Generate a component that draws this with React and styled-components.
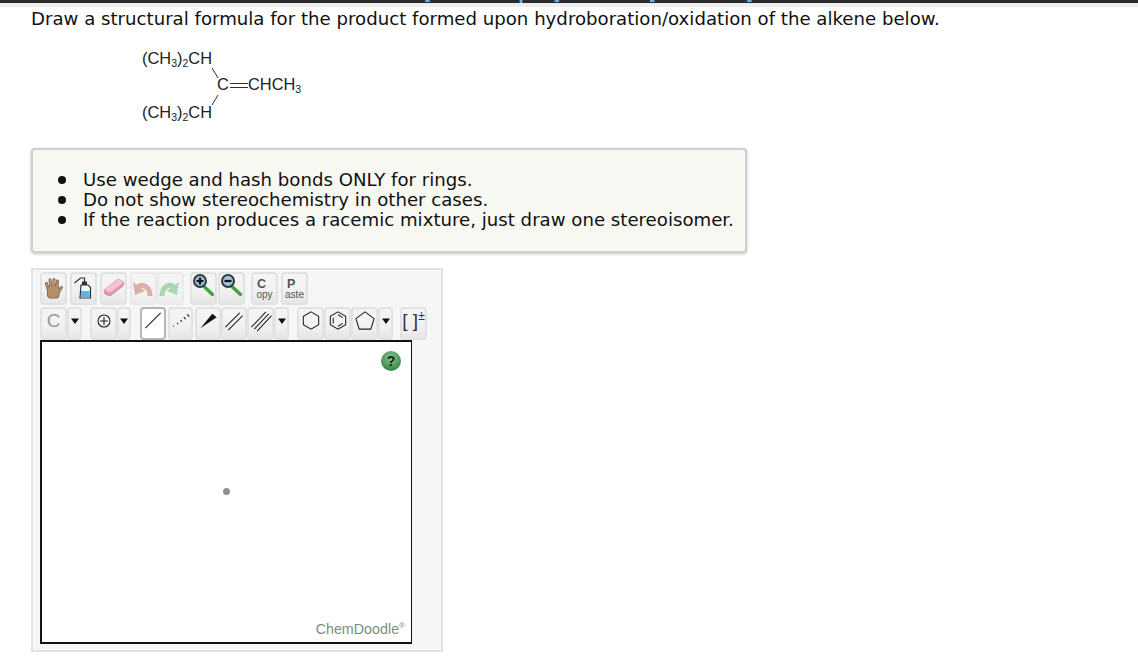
import styled, { createGlobalStyle } from "styled-components";

const GlobalStyle = createGlobalStyle`
  html, body {
    margin: 0;
    padding: 0;
    background: #fff;
    font-family: "DejaVu Sans", Verdana, sans-serif;
  }
`;

const TopBar = styled.div`
  height: 3px;
  background: #2b2b2b;
  overflow: hidden;
  display: flex;
  padding-left: 424px;
  gap: 88px;
`;

const TopLink = styled.span`
  font-size: 15px;
  line-height: 15px;
  font-weight: bold;
  letter-spacing: ${(p) => p.$spacing}px;
  margin-top: -12px;
  color: #63b5ea;
  white-space: nowrap;
`;

const SubBar = styled.div`
  height: 4px;
  background: #eeeeee;
`;

const Content = styled.div`
  padding: 2px 0 0 31px;
`;

const Question = styled.p`
  margin: 0;
  font-size: 18.15px;
  line-height: 20px;
  color: #111;
  white-space: nowrap;
`;

const Molecule = styled.svg`
  display: block;
  margin: 18px 0 0 105px;
`;

const Notice = styled.div`
  box-sizing: border-box;
  width: 716px;
  height: 105px;
  margin-top: 19px;
  padding: 20px 0 0 50px;
  background: #f8f8f3;
  border: 2px solid #cfcfcf;
  border-radius: 4px;
  box-shadow: 0 1px 3px rgba(0, 0, 0, 0.25);
`;

const Bullets = styled.ul`
  margin: 0;
  padding: 0;
  list-style: none;
  font-size: 18.15px;
  line-height: 20px;
  color: #111;
  white-space: nowrap;
`;

const Bullet = styled.li`
  display: flex;
  align-items: center;

  &::before {
    content: "";
    width: 8px;
    height: 8px;
    margin: 0 17px 0 -25px;
    border-radius: 50%;
    background: #111;
  }
`;

const Editor = styled.div`
  box-sizing: border-box;
  width: 412px;
  height: 384px;
  margin-top: 15px;
  padding: 2px 0 0 7px;
  background: #f6f6f6;
  border: 2px solid #e3e3e3;
`;

const ToolStack = styled.div`
  display: flex;
  flex-direction: column;
  gap: 2px;
`;

const ToolRow = styled.div`
  --lift: ${(p) => p.$lift ?? 0}px;
  display: flex;
  height: 33px;
`;

const Group = styled.div`
  display: flex;
  margin-right: ${(p) => p.$after ?? 0}px;
`;

const Tool = styled.div`
  box-sizing: border-box;
  width: ${(p) => p.$w ?? 27}px;
  height: 33px;
  padding-bottom: var(--lift);
  display: flex;
  flex-direction: column;
  align-items: center;
  justify-content: center;
  border: 2px solid ${(p) => (p.$active ? "#b5b5b5" : "#e2e2e2")};
  border-radius: 4px;
  background: ${(p) =>
    p.$active
      ? "#ffffff"
      : "linear-gradient(#f4f4f4 0%, #f2f2f2 55%, #e6e6e6 100%)"};
  color: #333;
  opacity: ${(p) => (p.$off ? 0.55 : 1)};
`;

const Letter = styled.span`
  font-family: "Liberation Sans", Arial, sans-serif;
  font-size: 19px;
  line-height: 19px;
  color: #999;
`;

const ClipLetter = styled.span`
  font-family: "Liberation Sans", Arial, sans-serif;
  font-size: 12.5px;
  line-height: 12px;
  font-weight: bold;
  color: #555;
  align-self: flex-start;
  margin-left: 4px;
`;

const ClipRest = styled.span`
  font-family: "Liberation Sans", Arial, sans-serif;
  font-size: 10px;
  line-height: 10px;
  color: #555;
`;

const Bracket = styled.span`
  font-family: "Liberation Sans", Arial, sans-serif;
  font-size: 19px;
  line-height: 19px;
  font-weight: 300;
  color: #333;
  white-space: nowrap;

  sup {
    font-size: 12px;
    line-height: 0;
  }
`;

const Canvas = styled.div`
  position: relative;
  box-sizing: border-box;
  width: 372px;
  height: 304px;
  background: #fff;
  border: 2px solid #111;
  border-right-width: 1px;
`;

const HelpBadge = styled.div`
  position: absolute;
  top: 9px;
  right: 10px;
  width: 20px;
  height: 20px;
  border-radius: 50%;
  display: flex;
  align-items: center;
  justify-content: center;
  background: radial-gradient(circle at 50% 35%, #8cc48c, #3d8a4a 72%, #2f7a3c);
  color: #14241a;
  font: bold 14px "Liberation Sans", Arial, sans-serif;
`;

const CenterDot = styled.div`
  position: absolute;
  left: 181px;
  top: 146px;
  width: 7px;
  height: 7px;
  border-radius: 50%;
  background: #8f8f8f;
`;

const Brand = styled.div`
  position: absolute;
  right: 6px;
  bottom: 5px;
  font-family: "Liberation Sans", Arial, sans-serif;
  font-size: 14.3px;
  color: #7d8f7d;

  sup {
    font-size: 8px;
    line-height: 0;
  }
`;

const Icon = ({ children, w = 24, h = 24 }) => (
  <svg width={w} height={h} viewBox={`0 0 ${w} ${h}`} fill="none">
    {children}
  </svg>
);

const Caret = () => (
  <Icon w={8} h={6}>
    <path d="M0 0.5h8L4 6z" fill="#111" />
  </Icon>
);

const handFingers = "M6 12L4.500 6.500M9 10L8 3M12 10V2.500M15 10L15.500 4M16.500 15L19.500 10.500";

const HandIcon = () => (
  <Icon>
    <path d={handFingers} stroke="#7a5c45" strokeWidth="3" strokeLinecap="round" />
    <rect x="5" y="8.500" width="12.500" height="13" rx="4" fill="#7a5c45" />
    <path d={handFingers} stroke="#b48e6d" strokeWidth="1.900" strokeLinecap="round" />
    <rect x="5.800" y="9.300" width="10.900" height="11.400" rx="3.500" fill="#b48e6d" />
  </Icon>
);

const Magnifier = ({ sign }) => (
  <Icon w={23} h={29}>
    <path d="M12 12.500l8.500 8" stroke="#3fa03f" strokeWidth="3.200" strokeLinecap="round" />
    <circle cx="8" cy="7" r="6" fill="#9fc4e0" stroke="#2f3a44" strokeWidth="2" />
    <path d="M4.500 7h7" stroke="#111" strokeWidth="2.200" />
    {sign === "+" && <path d="M8 3.500v7" stroke="#111" strokeWidth="2.200" />}
  </Icon>
);

const Formula = ({ x, y }) => (
  <text x={x} y={y}>
    (CH<tspan fontSize="10.500" dy="3">3</tspan>
    <tspan dy="-3">)</tspan>
    <tspan fontSize="10.500" dy="3">2</tspan>
    <tspan dy="-3">CH</tspan>
  </text>
);

function Toolbar() {
  return (
    <ToolStack>
      <ToolRow>
        <Group $after={3}>
          <Tool>
            <HandIcon />
          </Tool>
        </Group>
        <Group $after={3}>
          <Tool>
            <Icon>
              <path d="M2.500 6L8.500 1h4v4" stroke="#333" strokeWidth="1.200" />
              <path d="M10 4.500h5V8h-5z" fill="#333" />
              <path d="M9 8h7l2.500 2.500V21H8z" fill="#f4f8fb" stroke="#333" strokeWidth="1.200" />
              <rect x="9" y="14" width="8.800" height="6.300" fill="#67b0e0" />
            </Icon>
          </Tool>
        </Group>
        <Group $after={3}>
          <Tool>
            <Icon>
              <path d="M2 13L16 2l6 3-1 4L8 19l-5-2z" fill="#e996b8" stroke="#b08098" strokeWidth="0.700" />
              <path d="M2 13L16 2l6 3L8 15.500z" fill="#f6c2d6" />
            </Icon>
          </Tool>
        </Group>
        <Tool $off>
          <Icon>
            <path d="M18 19C18 10 11 6 6 10" stroke="#c8766c" strokeWidth="5" />
            <path d="M1 5l2 13 10-4z" fill="#c8766c" />
          </Icon>
        </Tool>
        <Group $after={6}>
          <Tool $off>
            <Icon>
              <path d="M3 19C3 10 10 6 15 10" stroke="#72bd78" strokeWidth="5" />
              <path d="M20 5l-2 13-10-4z" fill="#72bd78" />
            </Icon>
          </Tool>
        </Group>
        <Group $after={1}>
          <Tool>
            <Magnifier sign="+" />
          </Tool>
        </Group>
        <Group $after={6}>
          <Tool>
            <Magnifier sign="-" />
          </Tool>
        </Group>
        <Group $after={3}>
          <Tool>
            <ClipLetter>C</ClipLetter>
            <ClipRest>opy</ClipRest>
          </Tool>
        </Group>
        <Tool>
          <ClipLetter>P</ClipLetter>
          <ClipRest>aste</ClipRest>
        </Tool>
      </ToolRow>
      <ToolRow $lift={6}>
        <Tool>
          <Letter>C</Letter>
        </Tool>
        <Group $after={8}>
          <Tool $w={15}>
            <Caret />
          </Tool>
        </Group>
        <Tool>
          <Icon w={16} h={16}>
            <circle cx="8" cy="8" r="6" stroke="#222" strokeWidth="1.100" />
            <path d="M8 4v8M4 8h8" stroke="#222" strokeWidth="1.100" />
          </Icon>
        </Tool>
        <Group $after={9}>
          <Tool $w={14}>
            <Caret />
          </Tool>
        </Group>
        <Group $after={2}>
          <Tool $active $w={26}>
            <Icon>
              <path d="M4 20L20 4" stroke="#222" strokeWidth="1.100" />
            </Icon>
          </Tool>
        </Group>
        <Group $after={2}>
          <Tool $w={25}>
            <Icon>
              <path d="M4 17.500l.6.6M8 14.500l1 1.200M11.500 11.500l1.400 1.600M15 8.500l1.800 2M18.500 5.500l2.200 2.500" stroke="#222" strokeWidth="1.200" />
            </Icon>
          </Tool>
        </Group>
        <Tool $w={26}>
          <Icon>
            <path d="M4 20L16.500 5l4.500 3.500z" fill="#111" />
          </Icon>
        </Tool>
        <Tool $w={26}>
          <Icon>
            <path d="M3 19L18 4M6 22L21 7" stroke="#222" strokeWidth="1.100" />
          </Icon>
        </Tool>
        <Tool>
          <Icon>
            <path d="M2 19L17 3M5 21L20 5M8 23L23 7" stroke="#222" strokeWidth="1.100" />
          </Icon>
        </Tool>
        <Group $after={8}>
          <Tool $w={15}>
            <Caret />
          </Tool>
        </Group>
        <Tool>
          <Icon>
            <path d="M12 3l8 4.500v9L12 21l-8-4.500v-9z" stroke="#222" strokeWidth="1.100" />
          </Icon>
        </Tool>
        <Tool>
          <Icon>
            <path d="M12 3l8 4.500v9L12 21l-8-4.500v-9z" stroke="#222" strokeWidth="1.100" />
            <path d="M12 6l5 3M17 15l-5 3M7 15V9" stroke="#222" strokeWidth="1.100" />
          </Icon>
        </Tool>
        <Tool>
          <Icon>
            <path d="M12 3l9.500 7-3.500 11H6L2.500 10z" stroke="#222" strokeWidth="1.100" />
          </Icon>
        </Tool>
        <Group $after={7}>
          <Tool $w={15}>
            <Caret />
          </Tool>
        </Group>
        <Tool>
          <Bracket>
            [ ]<sup>±</sup>
          </Bracket>
        </Tool>
      </ToolRow>
    </ToolStack>
  );
}

export default function App() {
  return (
    <>
      <GlobalStyle />
      <TopBar>
        <TopLink $spacing={0.33}>[Review Topics]</TopLink>
        <TopLink $spacing={-0.4}>[References]</TopLink>
      </TopBar>
      <SubBar />
      <Content>
        <Question>
          Draw a structural formula for the product formed upon
          hydroboration/oxidation of the alkene below.
        </Question>
        <Molecule width="200" height="82" fontFamily="Liberation Sans, Arial, sans-serif" fontSize="16.400" fill="#222">
          <Formula x={6} y={16.5} />
          <text x="81" y="43">C</text>
          <text x="112" y="43">
            CHCH<tspan fontSize="10.500" dy="3">3</tspan>
          </text>
          <Formula x={6} y={70.5} />
          <path d="M76 21l6 10M82 48l-6 10M94 36.500h18M94 40.500h18" stroke="#333" strokeWidth="1" />
        </Molecule>
        <Notice>
          <Bullets>
            <Bullet>Use wedge and hash bonds ONLY for rings.</Bullet>
            <Bullet>Do not show stereochemistry in other cases.</Bullet>
            <Bullet>If the reaction produces a racemic mixture, just draw one stereoisomer.</Bullet>
          </Bullets>
        </Notice>
        <Editor>
          <Toolbar />
          <Canvas>
            <HelpBadge>?</HelpBadge>
            <CenterDot />
            <Brand>
              ChemDoodle<sup>®</sup>
            </Brand>
          </Canvas>
        </Editor>
      </Content>
    </>
  );
}
